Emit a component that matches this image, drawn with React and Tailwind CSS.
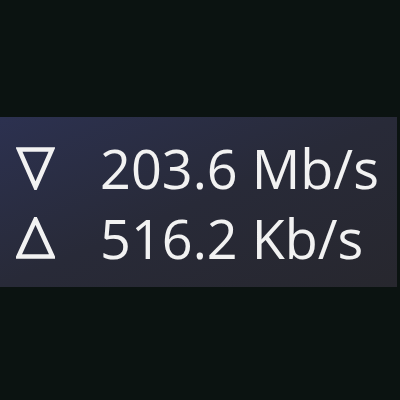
import React from "react";

const Down = () => (
  <svg width="39" height="43" viewBox="0 0 39 43" fill="none" stroke="#f2f2f2" strokeWidth="4.5" strokeLinejoin="miter">
    <polygon points="3,2.5 36,2.5 19.5,40" />
  </svg>
);

const Up = () => (
  <svg width="39" height="42" viewBox="0 0 39 42" fill="none" stroke="#f2f2f2" strokeWidth="4.5" strokeLinejoin="miter">
    <polygon points="19.5,2.5 36.5,39.5 2.5,39.5" />
  </svg>
);

const rows = [
  { Icon: Down, value: "203.6 Mb/s" },
  { Icon: Up, value: "516.2 Kb/s" },
];

export default function App() {
  return (
    <div className="w-[400px] h-[400px] bg-[#0b1311] flex flex-col pt-[117px]">
      {/* Speed panel */}
      <div className="w-[397px] h-[170px] bg-gradient-to-br from-[#2c3150] via-[#282a38] to-[#27272e] flex flex-col pt-[16px] font-['Open_Sans',sans-serif] text-[#f2f2f2]">
        {rows.map(({ Icon, value }) => (
          <div key={value} className="flex items-center h-[70px]">
            <div className="w-[100px] pl-[16px] flex items-center">
              <Icon />
            </div>
            <span className="text-[54px] leading-none">{value}</span>
          </div>
        ))}
      </div>
    </div>
  );
}
